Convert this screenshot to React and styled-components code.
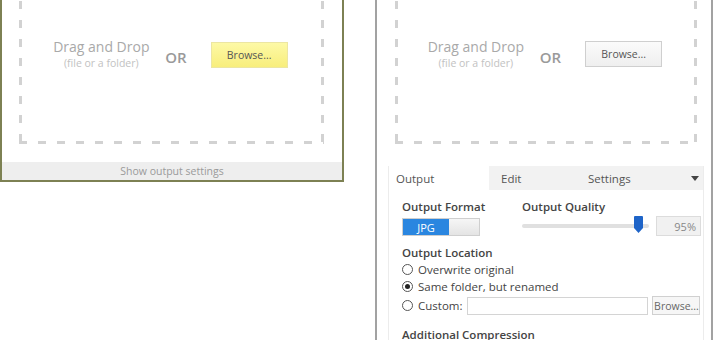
import React from "react";
import styled, { createGlobalStyle } from "styled-components";

const Global = createGlobalStyle`
  html, body { margin: 0; padding: 0; background: #fff; }
  body { width: 720px; height: 340px; overflow: hidden; font-family: "Open Sans", "Noto Sans", sans-serif; }
`;

const Page = styled.div`
  display: flex;
  align-items: flex-start;
  width: 720px;
  height: 340px;
  overflow: hidden;
`;

const Window = styled.div`
  box-sizing: border-box;
  display: flex;
  flex-direction: column;
  width: ${(p) => p.$w}px;
  height: ${(p) => p.$h}px;
  margin-left: ${(p) => p.$ml}px;
  border: 2px solid ${(p) => p.$border};
  border-top: none;
  background: #fff;
`;

const dash = "#d2d2d2";
const DropZone = styled.div`
  box-sizing: border-box;
  width: ${(p) => p.$w}px;
  height: 144px;
  margin-left: ${(p) => p.$ml}px;
  flex-shrink: 0;
  display: flex;
  justify-content: center;
  align-items: flex-start;
  padding-top: 38px;
  background-image:
    repeating-linear-gradient(to bottom, ${dash} 0 8px, transparent 8px 19px),
    repeating-linear-gradient(to bottom, ${dash} 0 8px, transparent 8px 19px),
    repeating-linear-gradient(to right, ${dash} 0 8px, transparent 8px 19px);
  background-size: 3px 100%, 3px 100%, 100% 3px;
  background-position: 0 1px, 100% 1px, 0 100%;
  background-repeat: no-repeat;
`;

const DragBlock = styled.div`
  display: flex;
  flex-direction: column;
  align-items: center;
  width: 92px;
`;

const DragTitle = styled.div`
  font-size: 14px;
  color: #a9a9a9;
  line-height: 18px;
  white-space: nowrap;
`;

const DragSub = styled.div`
  font-size: 10.5px;
  color: #c2c2c2;
  line-height: 14px;
  white-space: nowrap;
`;

const Or = styled.div`
  font-size: 15px;
  font-weight: 600;
  color: #9a9a9a;
  margin: 9px 24px 0 18px;
  line-height: 20px;
`;

const BigButton = styled.div`
  box-sizing: border-box;
  width: 77px;
  height: 26px;
  margin-top: ${(p) => (p.$yellow ? 4 : 3)}px;
  display: flex;
  align-items: center;
  justify-content: center;
  font-size: 10.5px;
  color: #555;
  border: 1px solid ${(p) => (p.$yellow ? "#ece6a2" : "#cfcfcf")};
  background: ${(p) =>
    p.$yellow
      ? "linear-gradient(#fdf9a6, #f8ee7c)"
      : "linear-gradient(#fbfbfb, #efefef)"};
`;

const Footer = styled.div`
  margin-top: auto;
  height: 18px;
  background: #eeeeee;
  display: flex;
  align-items: center;
  justify-content: center;
  font-size: 10.5px;
  color: #9a9a9a;
`;

const Tabs = styled.div`
  box-sizing: border-box;
  width: 316px;
  margin: 22px 0 0 11px;
  border: 1px solid #ececec;
  border-top: none;
  flex: 1;
`;

const TabBar = styled.div`
  display: flex;
  align-items: center;
  height: 24px;
  background: #f2f2f2;
  font-size: 11.5px;
  color: #555;
`;

const Tab = styled.div`
  box-sizing: border-box;
  height: 100%;
  display: flex;
  align-items: center;
  width: ${(p) => p.$w}px;
  padding-left: ${(p) => p.$pl}px;
  background: ${(p) => (p.$active ? "#fff" : "transparent")};
`;

const Caret = styled.div`
  margin-left: auto;
  margin-right: 4px;
  width: 0;
  height: 0;
  border-left: 4px solid transparent;
  border-right: 4px solid transparent;
  border-top: 5px solid #444;
`;

const Body = styled.div`
  padding: 8px 0 0 13px;
  font-size: 11.5px;
  color: #444;
`;

const OptRow = styled.div`
  display: grid;
  grid-template-columns: 120px 1fr;
`;

const Heading = styled.div`
  font-weight: 600;
  font-size: 11.5px;
  color: #444;
  line-height: 16px;
  margin-top: ${(p) => p.$mt || 0}px;
`;

const Toggle = styled.div`
  display: flex;
  width: 78px;
  height: 18px;
  margin-top: 3px;
  border: 1px solid #cfcfcf;
  box-sizing: border-box;
`;

const ToggleOn = styled.div`
  width: 46px;
  background: #2a86e0;
  color: #fff;
  font-size: 11px;
  display: flex;
  align-items: center;
  justify-content: center;
`;

const ToggleOff = styled.div`
  flex: 1;
  background: linear-gradient(#f6f6f6, #e4e4e4);
`;

const QualityRow = styled.div`
  display: flex;
  align-items: center;
  margin-top: 1px;
`;

const Track = styled.div`
  position: relative;
  width: 127px;
  height: 4px;
  background: #e0e0e0;
  border-radius: 2px;
`;

const Thumb = styled.svg`
  position: absolute;
  left: 112px;
  top: -8px;
`;

const ValueBox = styled.div`
  box-sizing: border-box;
  width: 45px;
  height: 20px;
  margin-left: 7px;
  background: #f1f1f1;
  border: 1px solid #dcdcdc;
  color: #888;
  font-size: 11px;
  display: flex;
  align-items: center;
  justify-content: flex-end;
  padding-right: 4px;
`;

const RadioRow = styled.div`
  display: flex;
  align-items: center;
  height: ${(p) => p.$h || 17}px;
  gap: 5px;
`;

const Radio = styled.span`
  box-sizing: border-box;
  width: 11px;
  height: 11px;
  border-radius: 50%;
  border: 1px solid #555;
  display: flex;
  align-items: center;
  justify-content: center;
  &::after {
    content: "";
    width: 5px;
    height: 5px;
    border-radius: 50%;
    background: ${(p) => (p.$on ? "#222" : "transparent")};
  }
`;

const Input = styled.div`
  box-sizing: border-box;
  width: 181px;
  height: 18px;
  margin-left: 0;
  border: 1px solid #d4d4d4;
  background: #fff;
`;

const SmallButton = styled.div`
  box-sizing: border-box;
  width: 48px;
  height: 19px;
  margin-left: -1px;
  border: 1px solid #d0d0d0;
  background: #f6f6f6;
  font-size: 10.5px;
  color: #666;
  display: flex;
  align-items: center;
  justify-content: center;
`;

function Drop({ w, ml, yellow }) {
  return (
    <DropZone $w={w} $ml={ml}>
      <DragBlock>
        <DragTitle>Drag and Drop</DragTitle>
        <DragSub>(file or a folder)</DragSub>
      </DragBlock>
      <Or>OR</Or>
      <BigButton $yellow={yellow}>Browse...</BigButton>
    </DropZone>
  );
}

export default function App() {
  return (
    <>
      <Global />
      <Page>
        <Window $w={344} $h={182} $ml={0} $border="#7d8153">
          <Drop w={305} ml={17} yellow />
          <Footer>Show output settings</Footer>
        </Window>
        <Window $w={338} $h={360} $ml={31} $border="#a2a2a2">
          <Drop w={302} ml={18} />
          <Tabs>
            <TabBar>
              <Tab $active $w={100} $pl={7}>Output</Tab>
              <Tab $w={87} $pl={12}>Edit</Tab>
              <Tab $w={80} $pl={12}>Settings</Tab>
              <Caret />
            </TabBar>
            <Body>
              <OptRow>
                <div>
                  <Heading $mt={1}>Output Format</Heading>
                  <Toggle>
                    <ToggleOn>JPG</ToggleOn>
                    <ToggleOff />
                  </Toggle>
                </div>
                <div>
                  <Heading $mt={1}>Output Quality</Heading>
                  <QualityRow>
                    <Track>
                      <Thumb width="9" height="17" viewBox="0 0 9 17">
                        <path d="M1 0 H8 Q9 0 9 1 V12 L4.5 17 L0 12 V1 Q0 0 1 0 Z" fill="#1e64c8" />
                      </Thumb>
                    </Track>
                    <ValueBox>95%</ValueBox>
                  </QualityRow>
                </div>
              </OptRow>
              <Heading $mt={9}>Output Location</Heading>
              <RadioRow>
                <Radio />
                Overwrite original
              </RadioRow>
              <RadioRow>
                <Radio $on />
                Same folder, but renamed
              </RadioRow>
              <RadioRow $h={21}>
                <Radio />
                Custom:
                <Input />
                <SmallButton>Browse...</SmallButton>
              </RadioRow>
              <Heading $mt={11}>Additional Compression</Heading>
            </Body>
          </Tabs>
        </Window>
      </Page>
    </>
  );
}
